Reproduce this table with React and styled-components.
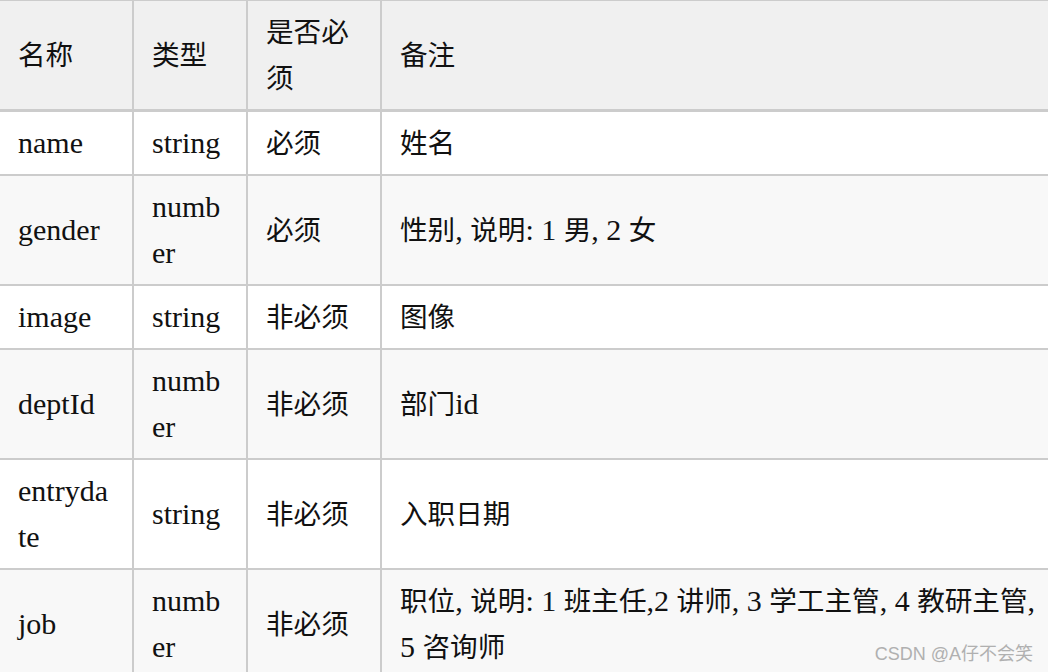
import React from "react";
import styled, { createGlobalStyle } from "styled-components";

const GlobalStyle = createGlobalStyle`
  html, body {
    margin: 0;
    padding: 0;
    background: #ffffff;
    overflow: hidden;
  }
`;

const Page = styled.div`
  position: relative;
  width: 1048px;
  height: 672px;
  overflow: hidden;
  background: #ffffff;
`;

const Table = styled.table`
  width: 1048px;
  table-layout: fixed;
  border-collapse: separate;
  border-spacing: 0;
  border-top: 1px solid #cccccc;
  font-family: "Liberation Serif", "Noto Sans CJK SC", serif;
  font-size: 30px;
  line-height: 46px;
  color: #111111;
`;

const Cell = styled.td`
  box-sizing: border-box;
  width: ${(p) => (p.$width ? `${p.$width}px` : "auto")};
  padding: 8px ${(p) => (p.$last ? "6px" : "18px")} 8px 18px;
  border-right: ${(p) => (p.$last ? "none" : "2px solid #cccccc")};
  border-bottom: 2px solid #cccccc;
  background: ${(p) => (p.$shade ? "#f8f8f8" : "#ffffff")};
  vertical-align: middle;
  text-align: left;
  word-break: break-all;
  font-weight: 400;
`;

const HeadCell = styled(Cell).attrs({ as: "th" })`
  background: #f0f0f0;
  border-bottom-width: 3px;
`;

const Han = styled.span`
  font-family: "Noto Sans CJK SC", sans-serif;
  font-size: 27.6px;
  line-height: 1;
`;

const Watermark = styled.div`
  position: absolute;
  right: 15px;
  bottom: 8px;
  font-family: "Liberation Sans", "Noto Sans CJK SC", sans-serif;
  font-size: 18px;
  line-height: 20px;
  color: #a9a9a9;
  opacity: 0.9;
`;

// chinese runs get the CJK font size, latin words and spaces stay separate
// so a wrapped line never shares one text node with the next
const mix = (text) =>
  text
    .split(/([\u4e00-\u9fff]+|\s+)/)
    .filter(Boolean)
    .map((part, i) =>
      /[\u4e00-\u9fff]/.test(part) ? (
        <Han key={i}>{part}</Han>
      ) : (
        <React.Fragment key={i}>{part}</React.Fragment>
      )
    );

const widths = [134, 114, 134, 666];
const headers = ["名称", "类型", "是否必须", "备注"];

const rows = [
  ["name", "string", "必须", "姓名"],
  ["gender", "number", "必须", "性别, 说明: 1 男, 2 女"],
  ["image", "string", "非必须", "图像"],
  ["deptId", "number", "非必须", "部门id"],
  ["entrydate", "string", "非必须", "入职日期"],
  [
    "job",
    "number",
    "非必须",
    "职位, 说明: 1 班主任,2 讲师, 3 学工主管, 4 教研主管, 5 咨询师",
  ],
];

export default function App() {
  return (
    <>
      <GlobalStyle />
      <Page>
        <Table>
          <thead>
            <tr>
              {headers.map((h, i) => (
                <HeadCell key={h} $width={widths[i]} $last={i === 3}>
                  {mix(h)}
                </HeadCell>
              ))}
            </tr>
          </thead>
          <tbody>
            {rows.map((row, r) => (
              <tr key={row[0]}>
                {row.map((value, i) => (
                  <Cell key={i} $shade={r % 2 === 1} $last={i === 3}>
                    {mix(value)}
                  </Cell>
                ))}
              </tr>
            ))}
          </tbody>
        </Table>
        <Watermark>CSDN @A仔不会笑</Watermark>
      </Page>
    </>
  );
}
